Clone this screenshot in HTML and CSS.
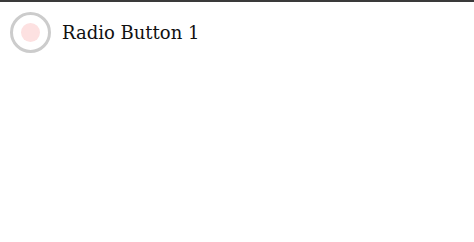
FILE: index.html
```html
<!DOCTYPE html>
<html>
<head>
<meta charset="utf-8">
<link rel="stylesheet" href="styles.css">
</head>
<body>
<div class="topbar"></div>
<label class="radio">
  <span class="radio-circle"><span class="radio-dot"></span></span>
  <span class="radio-label">Radio Button 1</span>
</label>
</body>
</html>
```
FILE: styles.css
```css
html, body {
  margin: 0;
  padding: 0;
  background: #ffffff;
}
.topbar {
  height: 2px;
  background: #3a3a3a;
}
.radio {
  display: flex;
  align-items: center;
  gap: 11px;
  padding: 10px 0 0 10px;
}
.radio-circle {
  box-sizing: border-box;
  width: 41px;
  height: 41px;
  border: 3px solid #cccccc;
  border-radius: 50%;
  display: flex;
  align-items: center;
  justify-content: center;
}
.radio-dot {
  width: 19px;
  height: 19px;
  border-radius: 50%;
  background: #fde1e1;
}
.radio-label {
  font-family: "DejaVu Serif", serif;
  font-size: 18px;
  color: #111111;
}
```
